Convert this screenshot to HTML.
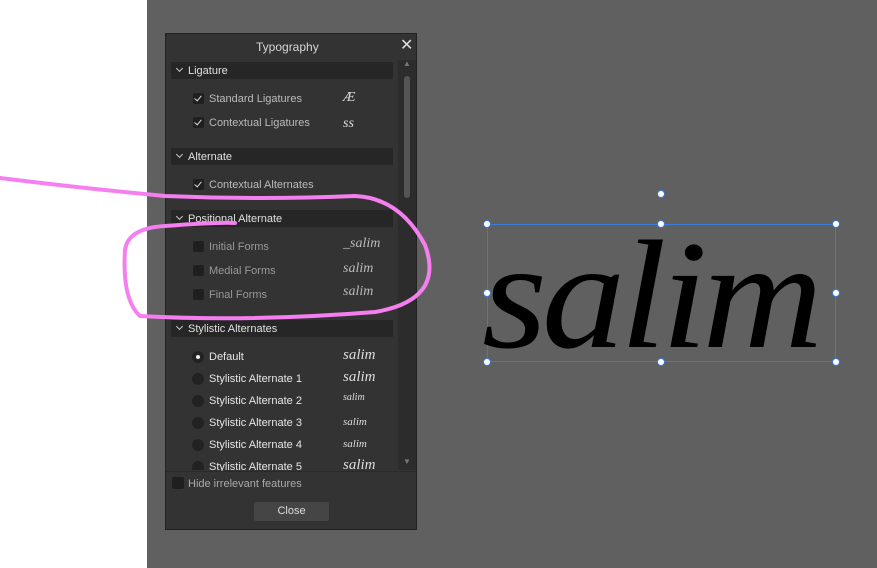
<!DOCTYPE html>
<html><head><style>
body{margin:0;width:877px;height:568px;position:relative;overflow:hidden;background:#fff;font-family:"Liberation Sans",sans-serif}
#canvas{position:absolute;left:147px;top:0;width:730px;height:568px;background:#606060}
#panel{position:absolute;left:165px;top:33px;width:250px;height:495px;background:#333;border:1px solid #222}
.t{position:absolute;color:#d6d6d6;font-size:11px;white-space:nowrap}
.hdr{position:absolute;left:5px;width:222px;height:17px;background:#262626}
.hdr span{position:absolute;left:17px;top:3px;color:#e0e0e0;font-size:11px}
.hdr i{position:absolute;left:6px;top:4px;width:4px;height:4px;border-right:1px solid #ccc;border-bottom:1px solid #ccc;transform:rotate(45deg)}
.cb{position:absolute;left:27px;width:11px;height:11px;background:#1f1f1f;border-radius:2px}
.cb.on::after{content:"";position:absolute;left:3px;top:1px;width:3px;height:6px;border-right:1.3px solid #ddd;border-bottom:1.3px solid #ddd;transform:rotate(40deg)}
.rd{position:absolute;left:26px;width:12px;height:12px;border-radius:50%;background:#222}
.rd.on::after{content:"";position:absolute;left:4px;top:4px;width:4px;height:4px;border-radius:50%;background:#eee}
.lbl{position:absolute;left:43px;font-size:11px;color:#bbb;margin-top:1px}
.lbl.w{color:#e6e6e6}
.s{position:absolute;left:177px;font-family:"Liberation Serif",serif;font-style:italic;color:#ddd;font-size:14px}
.h{position:absolute;width:6px;height:6px;border-radius:50%;background:#fff;border:1px solid #3a7bd5}
</style></head><body>
<div id="canvas"></div>
<div id="panel">
<div class="t" style="left:90px;top:6px;font-size:12px">Typography</div>
<div class="t" style="left:234px;top:1px;font-size:16px;color:#ddd">✕</div>
<div style="position:absolute;left:232px;top:26px;width:18px;height:410px;background:#2c2c2c"></div>
<div class="t" style="left:237px;top:25px;font-size:8px;color:#777">▲</div>
<div style="position:absolute;left:238px;top:42px;width:6px;height:122px;border-radius:3px;background:#555"></div>
<div class="t" style="left:237px;top:423px;font-size:8px;color:#777">▼</div>
<div class="hdr" style="top:28px"><i></i><span>Ligature</span></div>
<div class="cb on" style="top:59px"></div><div class="lbl" style="top:58px">Standard Ligatures</div><div class="s" style="top:56px">Æ</div>
<div class="cb on" style="top:83px"></div><div class="lbl" style="top:82px">Contextual Ligatures</div><div class="s" style="top:82px">ss</div>
<div class="hdr" style="top:114px"><i></i><span>Alternate</span></div>
<div class="cb on" style="top:145px"></div><div class="lbl" style="top:144px">Contextual Alternates</div>
<div class="hdr" style="top:176px"><i></i><span>Positional Alternate</span></div>
<div class="cb" style="top:207px"></div><div class="lbl" style="top:206px;color:#999">Initial Forms</div><div class="s" style="top:202px;color:#bbb">_salim</div>
<div class="cb" style="top:231px"></div><div class="lbl" style="top:230px;color:#999">Medial Forms</div><div class="s" style="top:227px;color:#bbb">salim</div>
<div class="cb" style="top:255px"></div><div class="lbl" style="top:254px;color:#999">Final Forms</div><div class="s" style="top:250px;color:#bbb">salim</div>
<div class="hdr" style="top:286px"><i></i><span>Stylistic Alternates</span></div>
<div class="rd on" style="top:317px"></div><div class="lbl w" style="top:316px">Default</div><div class="s" style="top:313px;font-size:15px">salim</div>
<div class="rd" style="top:339px"></div><div class="lbl w" style="top:338px">Stylistic Alternate 1</div><div class="s" style="top:335px;font-size:15px">salim</div>
<div class="rd" style="top:361px"></div><div class="lbl w" style="top:360px">Stylistic Alternate 2</div><div class="s" style="top:358px;font-size:10px">salim</div>
<div class="rd" style="top:383px"></div><div class="lbl w" style="top:382px">Stylistic Alternate 3</div><div class="s" style="top:382px;font-size:11px">salim</div>
<div class="rd" style="top:405px"></div><div class="lbl w" style="top:404px">Stylistic Alternate 4</div><div class="s" style="top:404px;font-size:11px">salim</div>
<div class="rd" style="top:427px;height:9px;border-radius:6px 6px 0 0"></div><div class="lbl w" style="top:426px;height:11px;overflow:hidden">Stylistic Alternate 5</div><div class="s" style="top:423px;font-size:15px;height:13px;overflow:hidden">salim</div>
<div style="position:absolute;left:0;top:437px;width:250px;height:1px;background:#2a2a2a"></div>
<div class="cb" style="left:6px;top:443px;width:12px;height:12px"></div><div class="lbl" style="left:22px;top:443px;color:#aaa">Hide irrelevant features</div>
<div style="position:absolute;left:88px;top:468px;width:75px;height:19px;background:#454545;border-radius:2px;color:#ddd;font-size:11px;text-align:center;line-height:19px">Close</div>
</div>
<div style="position:absolute;left:487px;top:224px;width:349px;height:138px;border:1px solid #3a7bd5;box-sizing:border-box"></div>
<div style="position:absolute;left:482px;top:200px;width:380px;height:190px;font-family:'Liberation Serif',serif;font-style:italic;font-size:155px;line-height:190px;color:#000;letter-spacing:-5px;transform:scaleX(1.08);transform-origin:0 0">salim</div>
<div class="h" style="left:657px;top:190px"></div>
<div class="h" style="left:483px;top:220px"></div><div class="h" style="left:657px;top:220px"></div><div class="h" style="left:832px;top:220px"></div>
<div class="h" style="left:483px;top:289px"></div><div class="h" style="left:832px;top:289px"></div>
<div class="h" style="left:483px;top:358px"></div><div class="h" style="left:657px;top:358px"></div><div class="h" style="left:832px;top:358px"></div>
<svg style="position:absolute;left:0;top:0" width="877" height="568"><path d="M0 178 Q80 188 165 196 Q260 200 355 196 Q400 198 425 245 Q445 300 375 312 Q250 322 140 316 Q122 300 125 250 Q128 228 165 226 Q220 222 235 223" fill="none" stroke="#f57ff0" stroke-width="4" stroke-linecap="round"/></svg>
</body></html>
